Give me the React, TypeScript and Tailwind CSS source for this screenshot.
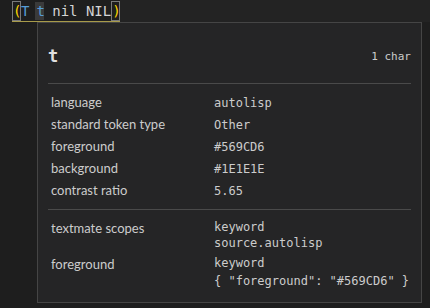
const mono = { fontFamily: '"DejaVu Sans Mono", "Liberation Mono", monospace' };

const rows: [string, string][] = [
  ["language", "autolisp"],
  ["standard token type", "Other"],
  ["foreground", "#569CD6"],
  ["background", "#1E1E1E"],
  ["contrast ratio", "5.65"],
];

function CodeLine() {
  return (
    <div className="flex h-[22px] bg-[#232323]">
      <div className="w-[12px] bg-[#1e1e1e]" />
      <div
        className="flex h-[22px] items-center border-b border-[#a89b4a] bg-[#1e1e1e] text-[14px] leading-[18px]"
        style={mono}
      >
        <span className="w-[9px] border border-[#7a7a7a] text-[#ffd700]">(</span>
        <span className="w-[8.4px] text-[#569cd6]">T</span>
        <span className="w-[6px]" />
        <span className="w-[8.4px] bg-[#3a3a3a] pl-[1px] text-[#569cd6]">t</span>
        <span className="whitespace-pre text-[#d4d4d4]"> nil NIL</span>
        <span className="w-[8.4px] border border-[#7a7a7a] text-[#ffd700]">)</span>
      </div>
    </div>
  );
}

export default function App() {
  return (
    <div
      className="relative h-[308px] w-[430px] overflow-hidden bg-[#1e1e1e] text-[#cccccc]"
      style={{ fontFamily: 'Lato, "Noto Sans", sans-serif' }}
    >
      <CodeLine />

      {/* token inspector hover */}
      <div className="absolute left-[37px] top-[22px] h-[281px] w-[385px] border border-[#454545] bg-[#252526] pl-[10px] pr-[10px] pt-[22px]">
        <div className="flex h-[24px] items-center justify-between">
          <span className="text-[17px] font-bold text-[#e0e0e0]" style={mono}>
            t
          </span>
          <span className="text-[11px]" style={mono}>
            1 char
          </span>
        </div>
        <div className="mt-[14px] h-px bg-[#4a4a4a]" />

        <div className="mt-[8px] pl-[3px]">
          {rows.map(([k, v]) => (
            <div key={k} className="flex h-[22px] items-center">
              <span className="w-[163px] text-[13px]">{k}</span>
              <span className="text-[12px]" style={mono}>
                {v}
              </span>
            </div>
          ))}
        </div>

        <div className="mt-[7px] h-px bg-[#4a4a4a]" />

        <div className="mt-[9px] pl-[3px]">
          <div className="flex items-start">
            <span className="w-[163px] pt-[1px] text-[13px] leading-[16px]">textmate scopes</span>
            <div className="text-[12px] leading-[16px]" style={mono}>
              <div>keyword</div>
              <div>source.autolisp</div>
            </div>
          </div>
          <div className="mt-[4px] flex items-start">
            <span className="w-[163px] pt-[1px] text-[13px] leading-[16px]">foreground</span>
            <div className="text-[12px] leading-[16px]" style={mono}>
              <div>keyword</div>
              <div className="mt-[2px] whitespace-pre">{'{ "foreground": "#569CD6" }'}</div>
            </div>
          </div>
        </div>
      </div>
    </div>
  );
}
